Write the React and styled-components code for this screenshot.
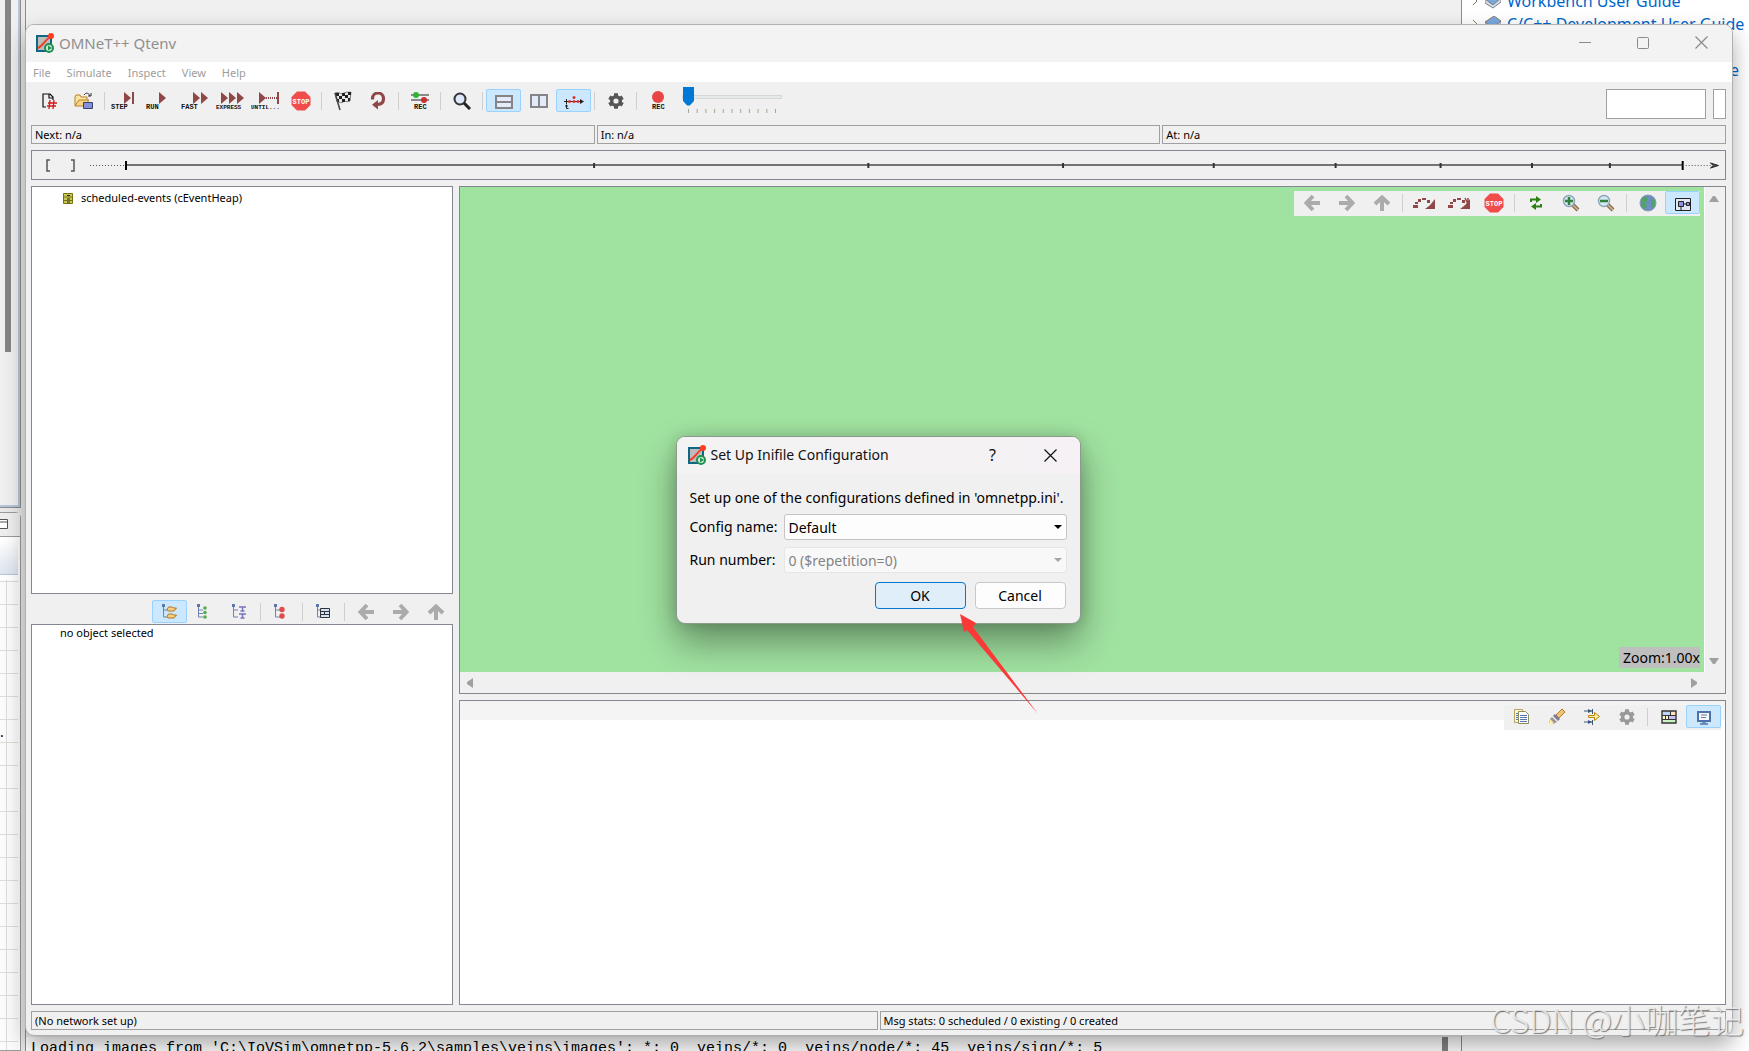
import React from 'react';
import styled, { createGlobalStyle, css } from 'styled-components';

const GlobalStyle = createGlobalStyle`
    * {
        box-sizing: border-box;
    }

    body {
        margin: 0;
        font-family: 'Noto Sans', 'Open Sans', sans-serif;
        font-size: 11px;
        line-height: 16px;
        color: #000;
    }

    button,
    select {
        font-family: inherit;
    }
`;

/* ---------- desktop behind the window ---------- */

const Desktop = styled.div`
    position: relative;
    display: flex;
    height: 100vh;
    overflow: hidden;
    background: #e9e9e9;
`;

const SideStrip = styled.div`
    flex: 0 0 21px;
    display: flex;
    flex-direction: column;
    gap: 4px;
`;

const SideTop = styled.div`
    flex: 0 0 508px;
    padding-left: 5px;
    background: #f0f0f0;
    border-right: 1px solid #8d8d8d;
    border-bottom: 1px solid #8d8d8d;
    box-shadow: inset -2px -2px 0 #b4c7d9;
`;

const SideThumb = styled.div`
    width: 6px;
    height: 352px;
    background: #858585;
`;

const SideBottom = styled.div`
    flex: 1;
    display: flex;
    flex-direction: column;
    background: #fff;
    border: 1px solid #9a9a9a;
    border-left: 0;
    border-top-right-radius: 6px;
`;

const SideTab = styled.div`
    height: 24px;
    padding-top: 5px;
    background: #eee;
    border-bottom: 1px solid #9a9a9a;
`;

const SideBanner = styled.div`
    height: 36px;
    margin: 2px 2px 5px 0;
    background: linear-gradient(#fff, #dce4ee);
    border-bottom: 1px solid #b4c7d9;
`;

const SideGrid = styled.div`
    flex: 1;
    width: 18px;
    padding-top: 142px;
    font-size: 14px;
    line-height: 20px;
    background-color: #fcfcfc;
    background-image: linear-gradient(90deg, transparent 6px, #dcdcdc 6px, #dcdcdc 7px, transparent 7px),
        linear-gradient(transparent 22px, #dcdcdc 22px);
    background-size: 100% 100%, 100% 23px;
    background-position: 0 0, 0 2px;
`;

const Workbench = styled.div`
    flex: 1;
    display: flex;
    min-width: 0;
    margin-left: 4px;
    border-left: 1px solid #8d8d8d;
`;

const EditorColumn = styled.div`
    flex: 1;
    display: flex;
    flex-direction: column;
    justify-content: flex-end;
    min-width: 0;
    background: #f0f0f0;
`;

const Console = styled.div`
    display: flex;
    justify-content: space-between;
    height: 14px;
    padding: 0 13px 0 5px;
    background: #fff;
    font-family: 'Liberation Mono', monospace;
    font-size: 15px;
    line-height: 24px;
    white-space: pre;
`;

const ConsoleThumb = styled.div`
    width: 6px;
    background: #858585;
`;

const GuideColumn = styled.div`
    flex: 0 0 288px;
    min-width: 0;
    background: #fff;
    border-left: 1px solid #8d8d8d;
`;

const GuideList = styled.ul`
    margin: -11px 0 0;
    padding: 0 0 0 9px;
    list-style: none;
`;

const GuideRow = styled.li`
    display: flex;
    align-items: center;
    justify-content: ${(props) => (props.$end ? 'flex-end' : 'flex-start')};
    gap: 6px;
    height: 23px;
    padding-right: ${(props) => (props.$end ? '10px' : '0')};
    white-space: nowrap;
`;

const GuideLink = styled.a`
    color: #0066cc;
    font-size: 16px;
    text-decoration: none;
`;

/* ---------- main window ---------- */

const Window = styled.div`
    position: absolute;
    inset: 24px 16px 15px 25px;
    display: flex;
    flex-direction: column;
    background: #f0f0f0;
    border: 1px solid #b0b0b0;
    border-radius: 9px;
    box-shadow: 0 10px 22px rgba(0, 0, 0, 0.32);
`;

const TitleBar = styled.header`
    display: flex;
    align-items: center;
    height: 37px;
    padding: 0 2px 2px 9px;
    background: #f3f3f3;
    border-radius: 8px 8px 0 0;
`;

const Title = styled.h1`
    flex: 1;
    margin: 0 0 0 4px;
    color: ${(props) => (props.$active ? '#111' : '#8f8f8f')};
    font-size: ${(props) => (props.$active ? '14px' : '15px')};
    font-weight: 400;
    line-height: 20px;
    white-space: nowrap;
`;

const CaptionButton = styled.button`
    display: flex;
    align-items: center;
    justify-content: center;
    width: 58px;
    height: 34px;
    padding: 0;
    border: 0;
    background: transparent;
    color: ${(props) => (props.$active ? '#111' : '#8a8a8a')};
    font-size: 16px;
`;

const MenuBar = styled.nav`
    display: flex;
    height: 20px;
    background: #fff;
`;

const MenuButton = styled.button`
    padding: 1px 8px 0;
    border: 0;
    background: transparent;
    color: #9d9d9d;
    font-size: 11px;
    line-height: 20px;

    &:first-child {
        padding-left: 7px;
    }
`;

const Client = styled.main`
    flex: 1;
    display: flex;
    flex-direction: column;
    gap: 6px;
    min-height: 0;
    padding: 7px 6px 5px 5px;
`;

const MainBar = styled.div`
    display: flex;
    gap: 7px;
    height: 30px;
`;

const Tools = styled.div`
    display: flex;
    background: #f0f0f0;
`;

const MainTools = styled(Tools)`
    flex: 1;
`;

const ToolButton = styled.button`
    display: flex;
    align-items: center;
    justify-content: center;
    width: 35px;
    height: 23px;
    padding: 0;
    border: 1px solid transparent;
    border-radius: 2px;
    background: transparent;

    ${(props) =>
        props.$on &&
        css`
            border-color: #99d1ff;
            background: #cce8ff;
        `}
`;

const Separator = styled.span`
    width: 1px;
    height: 18px;
    margin: 3px;
    background: #cfcfcf;
`;

const SpeedSlider = styled.div`
    width: 100px;
    margin: -2px 0 0 7px;

    svg {
        display: block;
    }
`;

const Range = styled.input`
    display: block;
    width: 100px;
    height: 19px;
    margin: 0;
    appearance: none;
    background: transparent;

    &::-webkit-slider-runnable-track {
        height: 4px;
        border: 1px solid #d6d6d6;
        background: #e7eaea;
    }

    &::-webkit-slider-thumb {
        width: 11px;
        height: 19px;
        margin-top: -9px;
        appearance: none;
        background: #0078d7;
        clip-path: polygon(0 0, 100% 0, 100% 76%, 62% 100%, 38% 100%, 0 76%);
    }
`;

const Readout = styled.div`
    width: ${(props) => props.$width};
    height: 30px;
    border: 1px solid #a0a0a0;
    background: #fff;
`;

const StatusRow = styled.div`
    display: grid;
    grid-template-columns: repeat(${(props) => props.$cells}, 1fr);
    gap: 2px;
`;

const StatusCell = styled.div`
    height: 19px;
    padding: 0 3px;
    border: 1px solid #a0a0a0;
    line-height: 17px;
    white-space: nowrap;
`;

const Timeline = styled.div`
    height: 30px;
    border: 1px solid #828790;

    svg {
        display: block;
        width: 100%;
        height: 28px;
    }
`;

const Split = styled.div`
    flex: 1;
    display: grid;
    grid-template-columns: 422px 1fr;
    gap: 6px;
    min-height: 0;
`;

const LeftColumn = styled.div`
    display: grid;
    grid-template-rows: 407fr 30px 380fr;
`;

const RightColumn = styled.div`
    display: grid;
    grid-template-rows: 507fr 304fr;
    gap: 6px;
    min-width: 0;
`;

const Panel = styled.section`
    min-width: 0;
    border: 1px solid #828790;
    background: #fff;
`;

const TreeRow = styled.div`
    display: flex;
    align-items: center;
    gap: 8px;
    padding: ${(props) => (props.$icon ? '3px 0 0 31px' : '0 0 0 28px')};
`;

const LeftTools = styled(Tools)`
    justify-content: flex-end;
    padding-top: 6px;
`;

const ScrollArea = styled(Panel)`
    display: grid;
    grid-template-columns: 1fr 20px;
    grid-template-rows: 1fr 21px;
    background: #f0f0f0;
`;

const Canvas = styled.div`
    display: flex;
    flex-direction: column;
    align-items: flex-end;
    justify-content: space-between;
    padding: 4px 4px 4px 0;
    background: #a0e2a0;
    border-right: 1px solid #fff;
`;

const CanvasTools = styled(Tools)`
    padding-bottom: 1px;
`;

const ZoomLabel = styled.div`
    padding: 0 0 0 4px;
    background: #bfbfbf;
    font-size: 14px;
    line-height: 21px;
`;

const Scrollbar = styled.div`
    display: flex;
    flex-direction: ${(props) => (props.$vertical ? 'column' : 'row')};
    align-items: center;
    justify-content: space-between;
    padding: ${(props) => (props.$vertical ? '7px 2px 6px 0' : '0 6px 0 5px')};
`;

const LogHeader = styled.div`
    height: 19px;
    background: #f4f4f4;
`;

const LogTools = styled(Tools)`
    float: right;
    margin: 4px 4px 0 0;
    padding-bottom: 1px;
`;

/* ---------- dialog ---------- */

const DialogLayer = styled.div`
    position: absolute;
    inset: 0 2px 0 0;
    display: flex;
    align-items: center;
    justify-content: center;
`;

const Dialog = styled.form`
    width: 405px;
    border: 1px solid #8c9a8c;
    border-radius: 9px;
    background: #f0f0f0;
    box-shadow: 0 18px 36px rgba(0, 0, 0, 0.38), 0 0 14px rgba(0, 0, 0, 0.15);
`;

const DialogTitleBar = styled(TitleBar)`
    padding: 0 0 1px 10px;
    background: linear-gradient(90deg, #f3f3f3, #f5f1f4);
`;

const DialogBody = styled.div`
    display: grid;
    grid-template-columns: auto 1fr;
    row-gap: 7px;
    column-gap: 7px;
    align-items: center;
    padding: 14px 13px 14px;
    font-size: 14px;
    line-height: 20px;
    white-space: nowrap;
`;

const Message = styled.p`
    grid-column: 1 / -1;
    margin: 0 0 -1px;
`;

const SelectBox = styled.div`
    position: relative;

    svg {
        position: absolute;
        top: 10px;
        right: 5px;
        pointer-events: none;
    }
`;

const Select = styled.select`
    display: block;
    width: 100%;
    height: 26px;
    padding: 0 3px;
    appearance: none;
    border: 1px solid #c4c4c4;
    border-radius: 3px;
    background: #fdfdfd;
    color: #000;
    font-size: 14px;

    &:disabled {
        border-color: #e6e6e6;
        background: #f8f8f8;
        color: #838383;
        opacity: 1;
    }
`;

const DialogButtons = styled.div`
    grid-column: 1 / -1;
    display: flex;
    justify-content: flex-end;
    gap: 9px;
    padding: 2px 1px 0 0;
`;

const PushButton = styled.button`
    width: 91px;
    height: 27px;
    padding: 0;
    border: 1px solid ${(props) => (props.$default ? '#0078d4' : '#c8c8c8')};
    border-radius: 4px;
    background: ${(props) => (props.$default ? '#e0eef9' : '#fdfdfd')};
    color: #000;
    font-size: 14px;
`;

const Pointer = styled.svg`
    position: absolute;
    top: calc(50% + 84px);
    left: calc(50% + 82px);
`;

const Watermark = styled.div`
    position: absolute;
    right: 5px;
    bottom: 11px;
    color: rgba(242, 242, 242, 0.85);
    font-family: 'Noto Sans CJK SC', sans-serif;
    font-size: 33px;
    font-weight: 300;
    line-height: 42px;
    text-shadow: 1px 1px 1px rgba(90, 90, 90, 0.75);
    white-space: nowrap;
`;

/* ---------- icons ---------- */

const MAROON = '#8f4747';

const Icon = ({ w = 18, h = 18, children }) => (
    <svg width={w} height={h} viewBox={`0 0 ${w} ${h}`} fill="none" aria-hidden="true">
        {children}
    </svg>
);

const AppIcon = () => (
    <Icon w={20} h={20}>
        <path d="M2 3h14v15H2z" fill="#bcbcbc" stroke="#116684" strokeWidth="2" />
        <path d="M3 15C8 13 9 8 16 3" stroke="#f43c22" strokeWidth="2" />
        <circle cx="16" cy="3" r="3" fill="#fb3e22" />
        <circle cx="14" cy="15" r="4" fill="#d5e8dc" stroke="#219150" strokeWidth="2" />
        <path d="M13 12.5v5l4-2.5z" fill="#219150" />
    </Icon>
);

const Tag = ({ x, children }) => (
    <text
        x={x}
        y="18"
        fontFamily="Liberation Mono, monospace"
        fontSize={children.length > 4 ? 6 : 7}
        fontWeight="700"
        fill="#111"
    >
        {children}
    </text>
);

const RunIcon = ({ label, arrows, bar, dots }) => (
    <Icon w={30} h={19}>
        {arrows.map((ax) => (
            <path key={ax} d={`M${ax} 1l7 6-7 6z`} fill={MAROON} />
        ))}
        {dots && <path d="M15 7h11" stroke={MAROON} strokeWidth="2" strokeDasharray="1 1" />}
        {bar && <path d={`M${bar} 1v12`} stroke={MAROON} strokeWidth="2" />}
        <Tag x={0}>{label}</Tag>
    </Icon>
);

const StopIcon = () => (
    <Icon w={20} h={20}>
        <path d="M6 .5h8L19.500 6v8L14 19.500H6L.5 14V6z" fill="#f04c4c" />
        <text
            x="10"
            y="12.500"
            textAnchor="middle"
            fontFamily="Liberation Mono, monospace"
            fontSize="7"
            fontWeight="700"
            fill="#fff"
        >
            STOP
        </text>
    </Icon>
);

const NewIcon = () => (
    <Icon>
        <path d="M6 15H3V2h7l3 3v3M9 2v4h4" stroke="#111" strokeWidth="1.200" fill="none" />
        <path d="M10 8l-1 9M14 8l-1 9M8 11h9M7 14h9" stroke="#d01818" strokeWidth="1.300" />
    </Icon>
);

const OpenIcon = () => (
    <Icon w={20} h={18}>
        <path d="M1 14V5l1-2h4l1 2h6v4" fill="#fbe3a0" stroke="#b9822f" />
        <path d="M1 14l4-6h10l-4 6z" fill="#f9d582" stroke="#b9822f" />
        <path d="M10 3c2-3 5-2 6 1m-2 0h3V1" stroke="#333" />
        <path d="M9.500 10.500h9v6h-9z" fill="#8490d8" stroke="#37426e" />
    </Icon>
);

const FlagIcon = () => (
    <Icon w={20} h={20}>
        <path d="M2 2c4-2 5 2 9 0s5 0 7-1l-1 9c-3 2-4-1-7 1s-4-1-6 0z" fill="#e8e8e8" stroke="#333" strokeWidth=".6" />
        <path
            d="M3 2h3v3H3zM9 2h3v3H9zM15 1h3v3h-3zM6 5h3v3H6zM12 4h3v3h-3zM4 8h2v3H4zM9 8h3v3H9zM15 7h2v3h-2z"
            fill="#222"
        />
        <path d="M2 2l5 17" stroke="#444" strokeWidth="1.500" />
    </Icon>
);

const RebuildIcon = () => (
    <Icon>
        <path d="M3.500 7.500V6.500a5 5 0 0 1 11 0c0 4-2 6-6 6" stroke={MAROON} strokeWidth="3.200" />
        <path d="M9 8v9.500L3 12.800z" fill={MAROON} />
    </Icon>
);

const EventRecIcon = () => (
    <Icon w={20} h={20}>
        <path d="M1 4h18M1 9h18" stroke="#222" />
        <circle cx="6" cy="4" r="3" fill="#2fb52f" />
        <circle cx="14" cy="9" r="3" fill="#cc3030" />
        <Tag x={4}>REC</Tag>
    </Icon>
);

const FindIcon = () => (
    <Icon>
        <circle cx="7" cy="7" r="5.500" fill="#dde8fa" stroke="#333" strokeWidth="2" />
        <path d="M11 11l6 6" stroke="#222" strokeWidth="3" />
    </Icon>
);

const RowsIcon = () => (
    <Icon w={20} h={16}>
        <path d="M2 3h16v12H2zM2 9h16" fill="#e2ebf7" stroke="#848489" strokeWidth="2" />
    </Icon>
);

const ColsIcon = () => (
    <Icon w={20} h={16}>
        <path d="M2 2h16v12H2zM10 2v12" fill="#e2ebf7" stroke="#848489" strokeWidth="2" />
    </Icon>
);

const TimelineIcon = () => (
    <Icon w={22} h={16}>
        <path d="M1 8.500h18M3.500 6v5" stroke="#222" />
        <path d="M17 6l4 2.500-4 2.500z" fill="#222" />
        <circle cx="6.500" cy="8.500" r="1.500" fill="#e12f2f" />
        <circle cx="11" cy="8.500" r="1.500" fill="#e12f2f" />
        <circle cx="15" cy="8.500" r="1.500" fill="#e12f2f" />
        <circle cx="11" cy="4.500" r="1.500" fill="#e12f2f" />
        <path d="M3.500 11.500v4h2M2 13h3" stroke="#222" />
    </Icon>
);

const GearIcon = ({ color }) => (
    <Icon w={16} h={16}>
        <circle cx="8" cy="8" r="4.300" stroke={color} strokeWidth="3.400" />
        <path
            d="M8 .3v3M8 12.700v3M1.300 4.200l2.600 1.500M12.100 10.300l2.600 1.500M1.300 11.800l2.600-1.500M12.100 5.700l2.600-1.500"
            stroke={color}
            strokeWidth="4"
        />
    </Icon>
);

const RecIcon = () => (
    <Icon w={20} h={20}>
        <circle cx="10" cy="6" r="6" fill="#e84545" />
        <Tag x={4}>REC</Tag>
    </Icon>
);

const ArrowIcon = ({ turn = 0 }) => (
    <Icon w={18} h={18}>
        <g transform={`rotate(${turn} 9 9)`} stroke="#ababab" strokeWidth="4">
            <path d="M3 9h14M10 2L3.500 9l6.500 7" />
        </g>
    </Icon>
);

const HopIcon = ({ fast }) => (
    <Icon w={24} h={14}>
        <path d="M1 9h5v3H1zM3 6h3v2H3zM6 3h3v3H6zM10 2h4v2h-4zM15 4h3v3h-3z" fill={MAROON} />
        <path d="M23 3v10H13l4-3 2-2z" fill={MAROON} />
        {fast && <path d="M18 2l3 6V2" stroke={MAROON} strokeWidth="1.500" />}
    </Icon>
);

const RefreshIcon = () => (
    <Icon w={14} h={14}>
        <path d="M2 6V3.500h5M12 8v2.500H7" stroke="#2c8014" strokeWidth="2" />
        <path d="M7 0l5 3.500L7 7zM7 7l-5 3.500L7 14z" fill="#2c8014" />
    </Icon>
);

const ZoomIcon = ({ plus }) => (
    <Icon w={18} h={18}>
        <path d="M10 10l6 6" stroke="#8b6a51" strokeWidth="4" />
        <path d="M11 11l5 5" stroke="#d9b896" strokeWidth="1.500" />
        <circle cx="7" cy="7" r="5.500" fill="#d5e9f4" stroke="#8ba5b5" strokeWidth="1.400" />
        <path d={plus ? 'M3 7h8M7 3v8' : 'M3 7h8'} stroke="#31813a" strokeWidth="2.500" />
    </Icon>
);

const GlobeIcon = () => (
    <Icon>
        <circle cx="9" cy="9" r="8" fill="#6c8ec4" stroke="#8b9bb2" />
        <path d="M3 4c4-3 6 0 6 3l-3 2 2 3-2 4C2 13 1 9 3 4zM12 3l4 4v5l-3 2-1-5z" fill="#55a16a" />
    </Icon>
);

const ModuleIcon = () => (
    <Icon w={18} h={16}>
        <path d="M1.500 3.500h15v12h-15z" stroke="#222" fill="#dfe8f4" />
        <path d="M4.500 6.500h5v5h-5zM12.500 7.500h3v3h-3zM9 9h3M7 12v3" stroke="#222" fill="#8b93dd" />
    </Icon>
);

const Stem = () => (
    <>
        <path d="M2.500 3v11H7M2.500 7H7" stroke="#6d84ae" />
        <path d="M1 1h3v3H1z" fill="#5b77ab" />
    </>
);

const GroupedTreeIcon = () => (
    <Icon w={18} h={17}>
        <Stem />
        <path
            d="M6 6.500l1.500-2.500h4l1 1h3l-2.500 3H7zM6 13.500l1.500-2.500h4l1 1h3l-2.500 3H7z"
            fill="#f8cf80"
            stroke="#b07428"
        />
    </Icon>
);

const ChildrenTreeIcon = () => (
    <Icon w={18} h={17}>
        <Stem />
        <path d="M3 10.500h4" stroke="#6d84ae" />
        {[5, 9.5, 14].map((cy) => (
            <circle key={cy} cx="9" cy={cy} r="1.800" fill="#53ad4d" />
        ))}
    </Icon>
);

const TypeTreeIcon = () => (
    <Icon w={18} h={17}>
        <Stem />
        <path d="M8 4h7M11.500 4v4M9.500 8h4M8 11h7M11.500 11v4M9.500 15h4" stroke="#7473bd" strokeWidth="1.500" />
    </Icon>
);

const FlatTreeIcon = () => (
    <Icon w={18} h={17}>
        <Stem />
        <circle cx="9" cy="6.500" r="2.700" fill="#e04b4b" />
        <circle cx="9" cy="13" r="2.700" fill="#e04b4b" />
    </Icon>
);

const TableTreeIcon = () => (
    <Icon w={18} h={17}>
        <Stem />
        <path d="M5.500 5.500h9v9h-9zM5.500 8.500h9M5.500 11.500h9M9.500 8.500v3" stroke="#333" fill="#cfe2f8" />
    </Icon>
);

const CopyIcon = () => (
    <Icon w={18} h={18}>
        <path d="M1.500 1.500h8v13h-8z" fill="#fdf6d8" stroke="#b9a25a" />
        <path d="M5.500 3.500h7l3 3v9h-10z" fill="#fff" stroke="#8d8d62" />
        <path d="M7 7.500h7M7 9.500h7M7 11.500h7M7 13.500h7M3 5.500h2M3 7.500h2M3 9.500h2M3 11.500h2" stroke="#5577b5" />
    </Icon>
);

const TorchIcon = () => (
    <Icon w={18} h={18}>
        <path d="M8 7l6-6 3 3-6 6z" fill="#f2c370" stroke="#b5782e" />
        <path d="M5 8l5 5 2-2-5-5z" fill="#7d7d93" />
        <path d="M4 9l5 5-4 2-4-1 1-4z" fill="#9b9292" />
        <path d="M1 17l1-6 4 4z" fill="#fdf3a3" />
    </Icon>
);

const FilterIcon = () => (
    <Icon w={18} h={17}>
        <path d="M1 3h8M1 14h8M9.500 1v5M9.500 12v5" stroke="#3c5876" />
        <path d="M5 1l4 2-4 2zM5 12l4 2-4 2z" fill="#3c5876" />
        <path d="M5.500 7.500h6v-3l5 4-5 4v-3h-6z" fill="#fff0ad" stroke="#b8860b" />
    </Icon>
);

const MessagesIcon = () => (
    <Icon w={16} h={14}>
        <path d="M1 1h14v12H1z" fill="#c8f2c0" stroke="#333" strokeWidth="1.400" />
        <path d="M2 2h7v3H2z" fill="#bcd7f8" />
        <path d="M9 2h5v3H9z" fill="#fde2bb" />
        <path d="M2 6h5v3H2z" fill="#fffbd0" />
        <path d="M7 6h7v3H7z" fill="#c9c0f5" />
        <path d="M1 5.500h14M1 9.500h14M9.500 1v4M4.500 6v3M7.500 6v3" stroke="#333" />
    </Icon>
);

const MonitorIcon = () => (
    <Icon w={16} h={16}>
        <path d="M2 3h12v9H2z" fill="#f4f7fb" stroke="#4d72a9" strokeWidth="2" />
        <path d="M5 6h6M5 8.500h5" stroke="#6b7d99" />
        <path d="M6 13h4M4 15h8" stroke="#4d72a9" strokeWidth="1.500" />
    </Icon>
);

const HeapIcon = () => (
    <Icon w={10} h={11}>
        <path d="M.5.5h9v10h-9zM.5 4h9M.5 7.500h9" fill="#c9c95c" stroke="#777210" />
        <path d="M4 2.500h3M4 6h3M4 9h3" stroke="#222" />
    </Icon>
);

const BookIcon = () => (
    <Icon w={16} h={16}>
        <path d="M0 6l9-6 7 5-8 7z" fill="#79a8df" stroke="#8b7c70" />
        <path d="M0 6v4l8 5 8-6V5l-8 7z" fill="#d7dde6" stroke="#77818d" />
    </Icon>
);

const ChevronIcon = () => (
    <Icon w={8} h={10}>
        <path d="M2 1l4 4-4 4" stroke="#777" />
    </Icon>
);

const Caret = ({ turn = 0 }) => (
    <Icon w={10} h={10}>
        <path d="M4 2h2l4 6H0z" fill="#a0a0a0" transform={`rotate(${turn} 5 5)`} />
    </Icon>
);

const DropArrow = ({ color }) => (
    <Icon w={8} h={6}>
        <path d="M0 1h8L4 5z" fill={color} />
    </Icon>
);

const CloseIcon = () => (
    <Icon w={13} h={13}>
        <path d="M.5.5l12 12M12.500.5l-12 12" stroke="currentColor" strokeWidth="1.200" />
    </Icon>
);

/* ---------- data ---------- */

const mainTools = [
    { label: 'New run', icon: <NewIcon /> },
    { label: 'Open ini file', icon: <OpenIcon /> },
    null,
    { label: 'Step', icon: <RunIcon label="STEP" arrows={[13]} bar={22} /> },
    { label: 'Run', icon: <RunIcon label="RUN" arrows={[13]} /> },
    { label: 'Fast', icon: <RunIcon label="FAST" arrows={[12, 20]} /> },
    { label: 'Express', icon: <RunIcon label="EXPRESS" arrows={[5, 13, 21]} /> },
    { label: 'Until', icon: <RunIcon label="UNTIL..." arrows={[8]} bar={27} dots /> },
    { label: 'Stop', icon: <StopIcon /> },
    null,
    { label: 'Finish', icon: <FlagIcon /> },
    { label: 'Rebuild network', icon: <RebuildIcon /> },
    null,
    { label: 'Record eventlog', icon: <EventRecIcon /> },
    null,
    { label: 'Find objects', icon: <FindIcon /> },
    null,
    { label: 'Horizontal layout', icon: <RowsIcon />, on: true },
    { label: 'Vertical layout', icon: <ColsIcon /> },
    { label: 'Timeline', icon: <TimelineIcon />, on: true },
    null,
    { label: 'Preferences', icon: <GearIcon color="#555" /> },
    null,
    { label: 'Record video', icon: <RecIcon /> },
];

const treeTools = [
    { label: 'Grouped', icon: <GroupedTreeIcon />, on: true },
    { label: 'Children', icon: <ChildrenTreeIcon /> },
    { label: 'Inheritance', icon: <TypeTreeIcon /> },
    null,
    { label: 'Flat', icon: <FlatTreeIcon /> },
    null,
    { label: 'Table', icon: <TableTreeIcon /> },
    null,
    { label: 'Back', icon: <ArrowIcon /> },
    { label: 'Forward', icon: <ArrowIcon turn={180} /> },
    { label: 'Parent', icon: <ArrowIcon turn={90} /> },
];

const canvasTools = [
    { label: 'Back', icon: <ArrowIcon /> },
    { label: 'Forward', icon: <ArrowIcon turn={180} /> },
    { label: 'Parent', icon: <ArrowIcon turn={90} /> },
    null,
    { label: 'Run until next event', icon: <HopIcon /> },
    { label: 'Fast run until next event', icon: <HopIcon fast /> },
    { label: 'Stop', icon: <StopIcon /> },
    null,
    { label: 'Re-layout', icon: <RefreshIcon /> },
    { label: 'Zoom in', icon: <ZoomIcon plus /> },
    { label: 'Zoom out', icon: <ZoomIcon /> },
    null,
    { label: '3D scene', icon: <GlobeIcon /> },
    { label: 'Canvas', icon: <ModuleIcon />, on: true },
];

const logTools = [
    { label: 'Copy', icon: <CopyIcon /> },
    { label: 'Find', icon: <TorchIcon /> },
    { label: 'Filter', icon: <FilterIcon /> },
    { label: 'Configure', icon: <GearIcon color="#999" /> },
    null,
    { label: 'Messages', icon: <MessagesIcon /> },
    { label: 'Log', icon: <MonitorIcon />, on: true },
];

const ticks = ['33.2%', '49.4%', '60.9%', '69.800%', '77%', '83.200%', '88.600%', '93.200%'];

const ToolItems = ({ items }) =>
    items.map((item, i) =>
        item ? (
            <ToolButton key={i} type="button" aria-label={item.label} $on={item.on}>
                {item.icon}
            </ToolButton>
        ) : (
            <Separator key={i} />
        )
    );

const TimelineRuler = () => (
    <Timeline>
        <svg aria-hidden="true">
            <path d="M18 9h-3v11h3M39 9h3v11h-3" stroke="#555" strokeWidth="1.500" fill="none" />
            <line x1="58" x2="94" y1="14.500" y2="14.500" stroke="#555" strokeDasharray="1 2" />
            <line x1="94" x2="97.500%" y1="14" y2="14" stroke="#737373" strokeWidth="2" />
            <line x1="94" x2="94" y1="10" y2="19" stroke="#000" strokeWidth="2" />
            {ticks.map((x) => (
                <line key={x} x1={x} x2={x} y1="12" y2="17" stroke="#333" strokeWidth="2" />
            ))}
            <line x1="97.500%" x2="97.500%" y1="10" y2="19" stroke="#000" strokeWidth="2" />
            <line x1="97.500%" x2="99.200%" y1="14.500" y2="14.500" stroke="#555" strokeDasharray="1 2" />
            <svg x="99.200%" y="11" width="9" height="7" overflow="visible">
                <path d="M-1 1l8 2.500-8 2.500 3-2.500z" fill="#555" stroke="#222" />
            </svg>
        </svg>
    </Timeline>
);

const Backdrop = () => (
    <>
        <SideStrip>
            <SideTop>
                <SideThumb />
            </SideTop>
            <SideBottom>
                <SideTab>
                    <Icon w={8} h={11}>
                        <path d="M-2 .5h9.500v9H-2M-2 3h9" stroke="#555" fill="#fff" />
                    </Icon>
                </SideTab>
                <SideBanner />
                <SideGrid>.</SideGrid>
            </SideBottom>
        </SideStrip>
        <Workbench>
            <EditorColumn>
                <Console>
                    {"Loading images from 'C:\\IoVSim\\omnetpp-5.6.2\\samples\\veins\\images': *: 0  veins/*: 0  veins/node/*: 45  veins/sign/*: 5"}
                    <ConsoleThumb />
                </Console>
            </EditorColumn>
            <GuideColumn>
                <GuideList>
                    <GuideRow>
                        <ChevronIcon />
                        <BookIcon />
                        <GuideLink href="#workbench">Workbench User Guide</GuideLink>
                    </GuideRow>
                    <GuideRow>
                        <ChevronIcon />
                        <BookIcon />
                        <GuideLink href="#cdt">C/C++ Development User Guide</GuideLink>
                    </GuideRow>
                    <GuideRow />
                    <GuideRow $end>
                        <GuideLink href="#guide">e</GuideLink>
                    </GuideRow>
                </GuideList>
            </GuideColumn>
        </Workbench>
    </>
);

const ConfigDialog = () => (
    <Dialog onSubmit={(e) => e.preventDefault()}>
        <DialogTitleBar>
            <AppIcon />
            <Title as="h2" $active>
                Set Up Inifile Configuration
            </Title>
            <CaptionButton type="button" $active>
                ?
            </CaptionButton>
            <CaptionButton type="button" aria-label="Close" $active>
                <CloseIcon />
            </CaptionButton>
        </DialogTitleBar>
        <DialogBody>
            <Message>Set up one of the configurations defined in 'omnetpp.ini'.</Message>
            <label htmlFor="config">Config name:</label>
            <SelectBox>
                <Select id="config">
                    <option>Default</option>
                </Select>
                <DropArrow color="#000" />
            </SelectBox>
            <label htmlFor="run">Run number:</label>
            <SelectBox>
                <Select id="run" disabled>
                    <option>0 ($repetition=0)</option>
                </Select>
                <DropArrow color="#a5a5a5" />
            </SelectBox>
            <DialogButtons>
                <PushButton type="submit" $default>
                    OK
                </PushButton>
                <PushButton type="button">Cancel</PushButton>
            </DialogButtons>
        </DialogBody>
    </Dialog>
);

const App = () => {
    return (
        <Desktop>
            <GlobalStyle />
            <Backdrop />
            <Window>
                <TitleBar>
                    <AppIcon />
                    <Title>OMNeT++ Qtenv</Title>
                    <CaptionButton type="button" aria-label="Minimize">
                        <Icon w={12} h={12}>
                            <path d="M0 5.500h12" stroke="currentColor" />
                        </Icon>
                    </CaptionButton>
                    <CaptionButton type="button" aria-label="Maximize">
                        <Icon w={12} h={12}>
                            <rect x=".5" y=".5" width="11" height="11" rx="1" stroke="currentColor" />
                        </Icon>
                    </CaptionButton>
                    <CaptionButton type="button" aria-label="Close">
                        <CloseIcon />
                    </CaptionButton>
                </TitleBar>
                <MenuBar>
                    {['File', 'Simulate', 'Inspect', 'View', 'Help'].map((name) => (
                        <MenuButton key={name} type="button">
                            {name}
                        </MenuButton>
                    ))}
                </MenuBar>
                <Client>
                    <MainBar>
                        <MainTools>
                            <ToolItems items={mainTools} />
                            <SpeedSlider>
                                <Range type="range" min="0" max="100" defaultValue="0" aria-label="Animation speed" />
                                <Icon w={100} h={8}>
                                    {[...Array(11).keys()].map((i) => (
                                        <path key={i} d={`M${6.5 + i * 8.7} 3v4`} stroke="#a5a594" />
                                    ))}
                                </Icon>
                            </SpeedSlider>
                        </MainTools>
                        <Readout $width="100px" />
                        <Readout $width="13px" />
                    </MainBar>
                    <StatusRow $cells={3}>
                        <StatusCell>Next: n/a</StatusCell>
                        <StatusCell>In: n/a</StatusCell>
                        <StatusCell>At: n/a</StatusCell>
                    </StatusRow>
                    <TimelineRuler />
                    <Split>
                        <LeftColumn>
                            <Panel>
                                <TreeRow $icon>
                                    <HeapIcon />
                                    scheduled-events (cEventHeap)
                                </TreeRow>
                            </Panel>
                            <LeftTools>
                                <ToolItems items={treeTools} />
                            </LeftTools>
                            <Panel>
                                <TreeRow>no object selected</TreeRow>
                            </Panel>
                        </LeftColumn>
                        <RightColumn>
                            <ScrollArea>
                                <Canvas>
                                    <CanvasTools>
                                        <ToolItems items={canvasTools} />
                                    </CanvasTools>
                                    <ZoomLabel>Zoom:1.00x</ZoomLabel>
                                </Canvas>
                                <Scrollbar $vertical>
                                    <Caret />
                                    <Caret turn={180} />
                                </Scrollbar>
                                <Scrollbar>
                                    <Caret turn={-90} />
                                    <Caret turn={90} />
                                </Scrollbar>
                            </ScrollArea>
                            <Panel>
                                <LogTools>
                                    <ToolItems items={logTools} />
                                </LogTools>
                                <LogHeader />
                            </Panel>
                        </RightColumn>
                    </Split>
                    <StatusRow $cells={2}>
                        <StatusCell>(No network set up)</StatusCell>
                        <StatusCell>Msg stats: 0 scheduled / 0 existing / 0 created</StatusCell>
                    </StatusRow>
                </Client>
                <DialogLayer>
                    <ConfigDialog />
                    <Pointer width="80" height="102" viewBox="0 0 80 102" aria-hidden="true">
                        <path d="M0 0l16 9-3 4 65 87L7 16l-3 2z" fill="#fb3a38" />
                    </Pointer>
                </DialogLayer>
            </Window>
            <Watermark>CSDN @小咖笔记</Watermark>
        </Desktop>
    );
};

export default App;
